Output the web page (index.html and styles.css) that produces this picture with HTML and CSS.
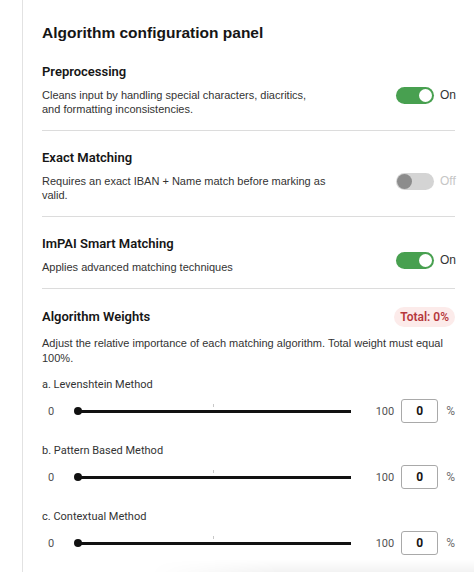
FILE: index.html
```html
<!DOCTYPE html>
<html lang="en">
<head>
<meta charset="utf-8">
<title>Algorithm configuration panel</title>
<link rel="stylesheet" href="styles.css">
</head>
<body>
<div class="panel">
  <h1 class="title">Algorithm configuration panel</h1>

  <section class="setting">
    <div class="setting-text">
      <h2 class="setting-name">Preprocessing</h2>
      <p class="setting-desc">Cleans input by handling special characters, diacritics,<br>and formatting inconsistencies.</p>
    </div>
    <div class="toggle-wrap">
      <span class="toggle is-on"><span class="knob"></span></span>
      <span class="toggle-label">On</span>
    </div>
  </section>

  <section class="setting">
    <div class="setting-text">
      <h2 class="setting-name">Exact Matching</h2>
      <p class="setting-desc">Requires an exact IBAN + Name match before marking as<br>valid.</p>
    </div>
    <div class="toggle-wrap">
      <span class="toggle is-off"><span class="knob"></span></span>
      <span class="toggle-label is-muted">Off</span>
    </div>
  </section>

  <section class="setting">
    <div class="setting-text">
      <h2 class="setting-name">ImPAI Smart Matching</h2>
      <p class="setting-desc">Applies advanced matching techniques</p>
    </div>
    <div class="toggle-wrap">
      <span class="toggle is-on"><span class="knob"></span></span>
      <span class="toggle-label">On</span>
    </div>
  </section>

  <section class="weights">
    <div class="weights-head">
      <h2 class="setting-name">Algorithm Weights</h2>
      <span class="badge">Total: 0%</span>
    </div>
    <p class="weights-desc">Adjust the relative importance of each matching algorithm. Total weight must equal 100%.</p>

    <div class="weight">
      <div class="weight-label">a. Levenshtein Method</div>
      <div class="weight-row">
        <span class="range-min">0</span>
        <div class="slider"><span class="track"></span><span class="tick"></span><span class="thumb"></span></div>
        <span class="range-max">100</span>
        <span class="weight-input">0</span>
        <span class="pct">%</span>
      </div>
    </div>

    <div class="weight">
      <div class="weight-label">b. Pattern Based Method</div>
      <div class="weight-row">
        <span class="range-min">0</span>
        <div class="slider"><span class="track"></span><span class="tick"></span><span class="thumb"></span></div>
        <span class="range-max">100</span>
        <span class="weight-input">0</span>
        <span class="pct">%</span>
      </div>
    </div>

    <div class="weight">
      <div class="weight-label">c. Contextual Method</div>
      <div class="weight-row">
        <span class="range-min">0</span>
        <div class="slider"><span class="track"></span><span class="tick"></span><span class="thumb"></span></div>
        <span class="range-max">100</span>
        <span class="weight-input">0</span>
        <span class="pct">%</span>
      </div>
    </div>
  </section>
</div>
<div class="bottom-shade"></div>
</body>
</html>
```

FILE: styles.css
```css
* { box-sizing: border-box; }

html, body {
  margin: 0;
  padding: 0;
  background: #ffffff;
}

body {
  font-family: "Liberation Sans", Arial, sans-serif;
  color: #161616;
  overflow: hidden;
}

.panel {
  margin-left: 22px;
  border-left: 1px solid #e2e2e2;
  padding: 23px 19px 0 19px;
  min-height: 572px;
}

.title {
  margin: 0 0 2px 0;
  font-size: 15.5px;
  line-height: 20px;
  font-weight: 700;
  color: #161616;
}

.setting {
  display: flex;
  align-items: center;
  justify-content: space-between;
  padding: 18px 0 14px 0;
  border-bottom: 1px solid #dcdcdc;
}

.setting-text {
  flex: 1;
}

.setting-name {
  margin: 0;
  font-family: Roboto, "Noto Sans", sans-serif;
  font-size: 13px;
  line-height: 18px;
  font-weight: 600;
  color: #161616;
}

.setting-desc {
  margin: 7px 0 0 0;
  font-size: 11px;
  line-height: 14px;
  color: #333333;
}

.toggle-wrap {
  display: flex;
  align-items: center;
  gap: 6px;
  margin-top: 11px;
}

.toggle {
  position: relative;
  display: block;
  width: 38px;
  height: 17px;
  border-radius: 9px;
}

.toggle.is-on { background: #48a050; }
.toggle.is-off { background: #d4d4d4; }

.knob {
  position: absolute;
  border-radius: 50%;
}

.is-on .knob {
  top: 2px;
  right: 2px;
  width: 13px;
  height: 13px;
  background: #ffffff;
}

.is-off .knob {
  top: 1px;
  left: 1px;
  width: 15px;
  height: 15px;
  background: #8c8c8c;
}

.toggle-label {
  font-size: 12px;
  line-height: 14px;
  width: 15px;
  color: #333333;
}

.toggle-label.is-muted { color: #c6c6c6; }

.weights {
  padding-top: 18px;
}

.weights-head {
  display: flex;
  align-items: center;
  justify-content: space-between;
}

.badge {
  height: 20px;
  padding: 0 6px;
  border-radius: 10px;
  background: #fcebea;
  color: #b6383c;
  font-family: Roboto, "Noto Sans", sans-serif;
  font-size: 12px;
  font-weight: 600;
  line-height: 20px;
}

.weights-desc {
  margin: 9px 0 0 0;
  font-size: 11px;
  line-height: 15px;
  color: #333333;
}

.weight {
  margin-top: 11px;
}

.weight + .weight {
  margin-top: 20px;
}

.weight-label {
  font-family: Roboto, "Noto Sans", sans-serif;
  font-size: 11px;
  line-height: 16px;
  color: #333333;
}

.weight-row {
  display: flex;
  align-items: center;
  height: 24px;
  margin-top: 6px;
}

.range-min,
.range-max {
  font-family: Roboto, "Noto Sans", sans-serif;
  font-size: 11px;
  color: #525252;
}

.range-min {
  width: 18px;
  text-align: center;
  margin-right: 15px;
}

.range-max {
  margin-left: 25px;
  margin-right: 7px;
}

.slider {
  position: relative;
  flex: 1;
  height: 10px;
}

.track {
  position: absolute;
  left: 3px;
  right: 0;
  top: 4px;
  height: 3px;
  background: #111111;
}

.tick {
  position: absolute;
  left: 50%;
  top: -2px;
  width: 1px;
  height: 3px;
  background: #c8c8c8;
}

.thumb {
  position: absolute;
  left: -1px;
  top: 1px;
  width: 8px;
  height: 8px;
  border-radius: 50%;
  background: #111111;
}

.weight-input {
  width: 37px;
  height: 24px;
  border: 1px solid #a9a9a9;
  border-radius: 3px;
  background: #ffffff;
  text-align: center;
  font-family: Roboto, "Noto Sans", sans-serif;
  font-size: 12px;
  font-weight: 700;
  line-height: 22px;
  color: #161616;
}

.pct {
  margin-left: 8px;
  font-family: Roboto, "Noto Sans", sans-serif;
  font-size: 12px;
  color: #6f6f6f;
}

.bottom-shade {
  position: fixed;
  left: 150px;
  right: 0;
  bottom: 0;
  height: 12px;
  background: linear-gradient(to bottom, rgba(0,0,0,0), rgba(0,0,0,0.05));
  -webkit-mask-image: linear-gradient(to right, transparent, #000 40%);
  mask-image: linear-gradient(to right, transparent, #000 40%);
  pointer-events: none;
}
```
